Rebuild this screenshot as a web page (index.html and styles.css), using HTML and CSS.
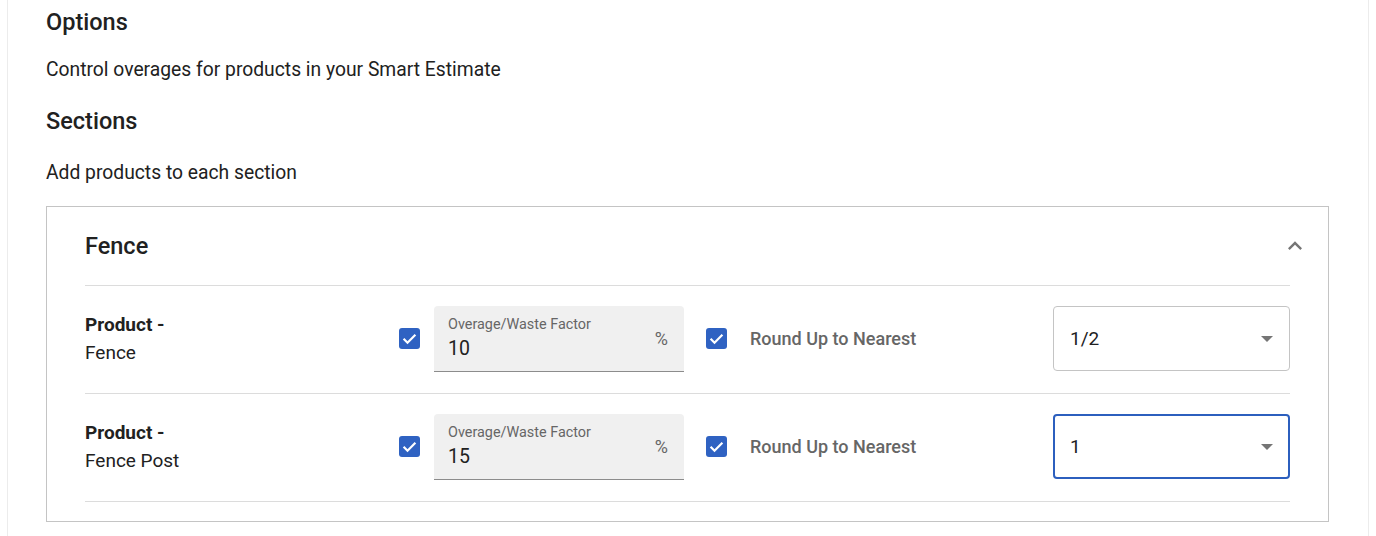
FILE: index.html
```html
<!DOCTYPE html>
<html>
<head>
    <meta charset="UTF-8">
    <title>Options</title>
    <link rel="stylesheet" href="styles.css">
</head>
<body>
    <div class="page">
        <h2 class="title">Options</h2>
        <p class="desc">Control overages for products in your Smart Estimate</p>
        <h2 class="title sec">Sections</h2>
        <p class="desc add">Add products to each section</p>

        <div class="card">
            <div class="cardHead">
                <span class="cardTitle">Fence</span>
                <svg class="chev" width="28" height="28" viewBox="0 0 24 24"><path d="M12 8l-6 6 1.41 1.41L12 10.83l4.59 4.58L18 14z" fill="#757575"/></svg>
            </div>
            <div class="rows">
                <div class="row">
                    <div class="name">
                        <b>Product -</b>
                        <span>Fence</span>
                    </div>
                    <svg class="check" width="21" height="21" viewBox="0 0 21 21"><rect width="21" height="21" rx="3" fill="#2f62c2"/><path d="M4.6 10.8l3.9 3.9 7.9-7.9" fill="none" stroke="#fff" stroke-width="2.2"/></svg>
                    <div class="field">
                        <div class="fieldText">
                            <span class="label">Overage/Waste Factor</span>
                            <span class="value">10</span>
                        </div>
                        <span class="unit">%</span>
                    </div>
                    <svg class="check check2" width="21" height="21" viewBox="0 0 21 21"><rect width="21" height="21" rx="3" fill="#2f62c2"/><path d="M4.6 10.8l3.9 3.9 7.9-7.9" fill="none" stroke="#fff" stroke-width="2.2"/></svg>
                    <span class="round">Round Up to Nearest</span>
                    <div class="select">
                        <span>1/2</span>
                        <svg width="12" height="6" viewBox="0 0 12 6"><path d="M0 0h12L6 6z" fill="#757575"/></svg>
                    </div>
                </div>
                <div class="row">
                    <div class="name">
                        <b>Product -</b>
                        <span>Fence Post</span>
                    </div>
                    <svg class="check" width="21" height="21" viewBox="0 0 21 21"><rect width="21" height="21" rx="3" fill="#2f62c2"/><path d="M4.6 10.8l3.9 3.9 7.9-7.9" fill="none" stroke="#fff" stroke-width="2.2"/></svg>
                    <div class="field">
                        <div class="fieldText">
                            <span class="label">Overage/Waste Factor</span>
                            <span class="value">15</span>
                        </div>
                        <span class="unit">%</span>
                    </div>
                    <svg class="check check2" width="21" height="21" viewBox="0 0 21 21"><rect width="21" height="21" rx="3" fill="#2f62c2"/><path d="M4.6 10.8l3.9 3.9 7.9-7.9" fill="none" stroke="#fff" stroke-width="2.2"/></svg>
                    <span class="round">Round Up to Nearest</span>
                    <div class="select focus">
                        <span>1</span>
                        <svg width="12" height="6" viewBox="0 0 12 6"><path d="M0 0h12L6 6z" fill="#757575"/></svg>
                    </div>
                </div>
            </div>
        </div>
    </div>
</body>
</html>
```

FILE: styles.css
```css
*{
    padding: 0;
    margin: 0;
    box-sizing: border-box;
}
body{
    font-family: Roboto, "Liberation Sans", sans-serif;
    color: #212121;
    background: #fff;
}
.page{
    margin-left: 7px;
    width: 1362px;
    height: 536px;
    border-left: 1px solid #ececec;
    border-right: 1px solid #ececec;
    padding: 10px 39px 0 38px;
}
.title{
    font-size: 23.5px;
    line-height: 24px;
    font-weight: 500;
}
.desc{
    font-size: 19.3px;
    line-height: 24px;
    margin-top: 24px;
}
.sec{
    margin-top: 27px;
}
.add{
    margin-top: 28px;
}
.card{
    margin-top: 21px;
    border: 1px solid #c4c4c4;
    padding: 0 38px 19px 38px;
}
.cardHead{
    height: 78px;
    display: flex;
    align-items: center;
    justify-content: space-between;
}
.cardTitle{
    font-size: 23.5px;
    font-weight: 500;
}
.chev{
    margin-right: -19px;
}
.rows{
    border-bottom: 1px solid #dcdcdc;
}
.row{
    height: 108px;
    border-top: 1px solid #dcdcdc;
    display: flex;
    align-items: center;
    padding-bottom: 2px;
}
.name{
    width: 314px;
    display: flex;
    flex-direction: column;
    font-size: 19px;
    line-height: 28px;
}
.name b{
    font-weight: 700;
}
.check{
    flex: none;
}
.field{
    width: 250px;
    height: 66px;
    margin-left: 14px;
    background: #f0f0f0;
    border-radius: 4px 4px 0 0;
    border-bottom: 1px solid #8c8c8c;
    display: flex;
    padding: 0 16px 0 14px;
}
.fieldText{
    flex: 1;
    display: flex;
    flex-direction: column;
    padding-top: 10px;
}
.label{
    font-size: 14.4px;
    line-height: 18px;
    color: #666;
}
.value{
    font-size: 19.5px;
    line-height: 26px;
    margin-top: 2px;
}
.unit{
    align-self: center;
    font-size: 18px;
    color: #666;
}
.check2{
    margin-left: 22px;
}
.round{
    margin-left: 23px;
    font-size: 18px;
    font-weight: 500;
    color: #666;
}
.select{
    margin-left: auto;
    width: 237px;
    height: 65px;
    border: 1px solid #c4c4c4;
    border-radius: 4px;
    display: flex;
    align-items: center;
    justify-content: space-between;
    padding: 0 16px 0 16px;
    font-size: 19px;
}
.select.focus{
    border: 2px solid #2c5fbe;
    padding: 0 15px;
}
```
